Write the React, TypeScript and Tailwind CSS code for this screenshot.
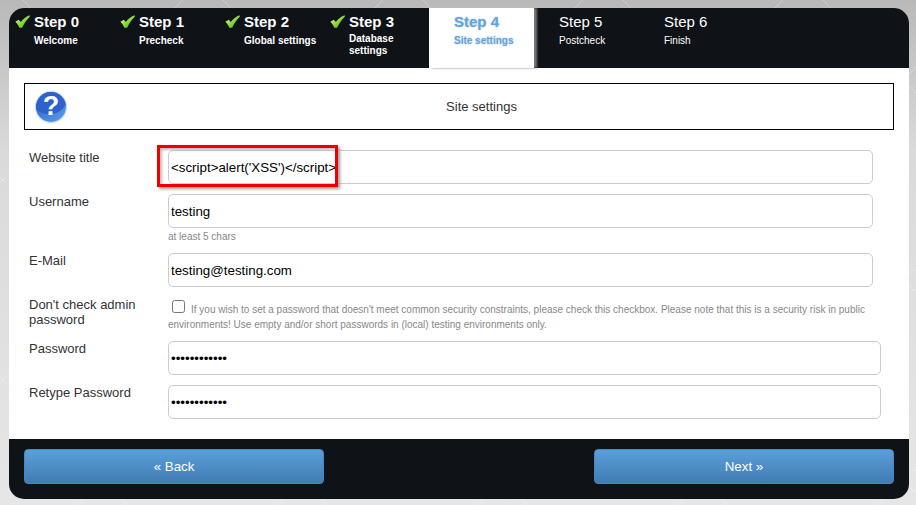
const steps = [
  { title: 'Step 0', sub: 'Welcome', done: true },
  { title: 'Step 1', sub: 'Precheck', done: true },
  { title: 'Step 2', sub: 'Global settings', done: true },
  { title: 'Step 3', sub: 'Database settings', done: true, wrapped: true },
  { title: 'Step 4', sub: 'Site settings', active: true },
  { title: 'Step 5', sub: 'Postcheck' },
  { title: 'Step 6', sub: 'Finish' },
]

function Check() {
  return (
    <svg viewBox="0 0 16 14" preserveAspectRatio="none" className="absolute left-[6px] top-[7px] h-[13px] w-[15px]">
      <defs>
        <linearGradient id="chk" x1="0" y1="0" x2="1" y2="1">
          <stop offset="0" stopColor="#e4f9a0" />
          <stop offset="0.5" stopColor="#8fdc3c" />
          <stop offset="1" stopColor="#3f9a14" />
        </linearGradient>
      </defs>
      <path d="M0.3 7.2 L4 5 L6.2 7.6 C8.4 4.6 11.2 2 15.6 0.3 L15.8 1.8 C12.6 4.8 10 8.6 7.6 13.7 L4.6 13.7 C3.6 11.2 2.2 9 0.3 7.2 Z" fill="url(#chk)" />
    </svg>
  )
}

function HelpIcon() {
  return (
    <div className="relative flex h-[30px] w-[30px] items-center justify-center overflow-hidden rounded-full bg-gradient-to-br from-[#2a5bc4] to-[#5aa0ee] shadow-[0_0_1px_1px_#c5d3e6]">
      <div className="absolute left-[-6px] top-[-14px] h-[36px] w-[38px] rounded-full bg-[#2c62cc]" />
      <span className="relative text-[27px] font-bold leading-none text-white">?</span>
    </div>
  )
}

function Row({ label, children, className = '' }: { label: string; children: React.ReactNode; className?: string }) {
  return (
    <div className={`flex ${className}`}>
      <label className="w-[139px] shrink-0 pr-2 text-[13px] leading-[15px] text-[#333]">{label}</label>
      <div className="min-w-0 flex-1">{children}</div>
    </div>
  )
}

function Field({ value, type = 'text', wide = false }: { value: string; type?: string; wide?: boolean }) {
  return (
    <input
      readOnly
      type={type}
      value={value}
      className={`block h-[34px] rounded-[5px] border border-[#ccc] bg-white px-[2px] text-[13.33px] text-black outline-none ${wide ? 'w-[713px]' : 'w-[705px]'}`}
    />
  )
}

export default function App() {
  return (
    <div className="relative min-h-[505px] overflow-hidden bg-gradient-to-b from-[#b9b9b9] via-[#dadada] via-30% to-[#e6e6e6] pb-[6px] pl-[9px] pr-[7px] pt-[8px] font-['Liberation_Sans',Arial,sans-serif]">
      {/* faint diamond lines of the page background */}
      <svg className="absolute inset-0 h-full w-full">
        <defs>
          <pattern id="diamonds" width="200" height="200" patternUnits="userSpaceOnUse">
            <path d="M183 0L0 183M200 183L183 200M23 0L200 177M0 177L23 200" stroke="#fff" strokeOpacity="0.3" fill="none" />
          </pattern>
        </defs>
        <rect width="100%" height="100%" fill="url(#diamonds)" />
      </svg>

      <div className="relative overflow-hidden rounded-[15px] bg-white">
        <div className="flex h-[60px] bg-[#0f1217]">
          {steps.map((s) => (
            <div
              key={s.title}
              className={`relative w-[105px] pl-[25px] pt-[5px] ${s.active ? 'bg-white text-[#64a3da] shadow-[3px_0_2px_#777] [text-shadow:0_0_2px_#a9c8e4]' : 'text-white'}`}
            >
              {s.done && <Check />}
              <div className={`text-[15px] leading-[17px] ${s.done || s.active ? 'font-bold' : ''}`}>{s.title}</div>
              <div className={`text-[10px] leading-[12px] ${s.wrapped ? 'mt-[3px]' : 'mt-[5px]'} ${s.done || s.active ? 'font-bold' : ''}`}>{s.sub}</div>
            </div>
          ))}
        </div>

        <div className="px-[15px] pt-[15px]">
          <div className="flex h-[47px] items-center border border-black pl-[11px]">
            <HelpIcon />
            <div className="flex-1 pl-[4px] text-center text-[13px] text-[#333]">Site settings</div>
          </div>
        </div>

        <form className="relative px-[20px] pt-[20px]">
          <Row label="Website title">
            <Field value="<script>alert('XSS')</script>" />
          </Row>
          <Row label="Username" className="mt-[10px]">
            <Field value="testing" />
            <p className="mt-[3px] text-[10px] leading-[12px] text-[#888]">at least 5 chars</p>
          </Row>
          <Row label="E-Mail" className="mt-[10px]">
            <Field value="testing@testing.com" />
          </Row>
          <Row label="Don't check admin password" className="mt-[10px]">
            <p className="pt-[3px] text-[10px] leading-[15px] text-[#888]">
              <input readOnly type="checkbox" className="relative top-0 ml-[4px] mr-[6px] h-[13px] w-[13px]" />
              If you wish to set a password that doesn't meet common security constraints, please check this checkbox. Please note that this is a security risk in public environments! Use empty and/or short passwords in (local) testing environments only.
            </p>
          </Row>
          <Row label="Password" className="mt-[9px]">
            <Field value="testing12345" type="password" wide />
          </Row>
          <Row label="Retype Password" className="mt-[10px]">
            <Field value="testing12345" type="password" wide />
          </Row>
          <div className="pointer-events-none absolute left-[148px] top-[15px] h-[42px] w-[181px] border-[3px] border-[#ee0000] shadow-[2px_2px_3px_#999,inset_2px_2px_3px_#bbb]" />
        </form>

        <div className="mt-[20px] flex h-[60px] items-start justify-between bg-[#0f1217] px-[15px] pt-[10px]">
          <button className="h-[35px] w-[300px] rounded-[4px] border border-[#4a86bd] bg-gradient-to-b from-[#5a9fdb] to-[#417cb3] text-[13.33px] text-white">« Back</button>
          <button className="h-[35px] w-[300px] rounded-[4px] border border-[#4a86bd] bg-gradient-to-b from-[#5a9fdb] to-[#417cb3] text-[13.33px] text-white">Next »</button>
        </div>
      </div>
    </div>
  )
}
